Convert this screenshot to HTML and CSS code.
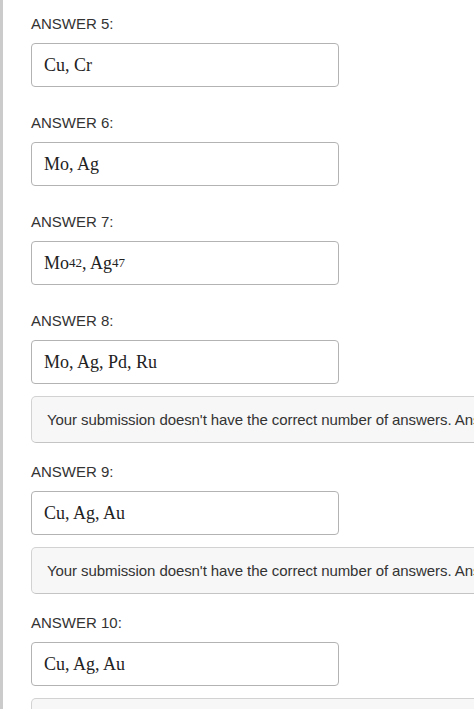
FILE: index.html
```html
<!DOCTYPE html>
<html lang="en">
<head>
    <meta charset="UTF-8">
    <meta name="viewport" content="width=device-width, initial-scale=1.0">
    <title>Answers</title>
    <link rel="stylesheet" href="styles.css">
</head>
<body>
    <div class="answers">
        <div class="question">
            <div class="question-label">ANSWER 5:</div>
            <div class="answer-box">Cu, Cr</div>
        </div>
        <div class="question">
            <div class="question-label">ANSWER 6:</div>
            <div class="answer-box">Mo, Ag</div>
        </div>
        <div class="question">
            <div class="question-label">ANSWER 7:</div>
            <div class="answer-box">Mo<sub>42</sub>, Ag<sub>47</sub></div>
        </div>
        <div class="question has-feedback">
            <div class="question-label">ANSWER 8:</div>
            <div class="answer-box">Mo, Ag, Pd, Ru</div>
            <div class="feedback">Your submission doesn't have the correct number of answers. Answers are separated with a comma.</div>
        </div>
        <div class="question has-feedback">
            <div class="question-label">ANSWER 9:</div>
            <div class="answer-box">Cu, Ag, Au</div>
            <div class="feedback">Your submission doesn't have the correct number of answers. Answers are separated with a comma.</div>
        </div>
        <div class="question has-feedback">
            <div class="question-label">ANSWER 10:</div>
            <div class="answer-box">Cu, Ag, Au</div>
            <div class="feedback">Your submission doesn't have the correct number of answers. Answers are separated with a comma.</div>
        </div>
    </div>
</body>
</html>
```

FILE: styles.css
```css
html, body { margin: 0; padding: 0; overflow: hidden; background: #fff; }
body { font-family: Arial, "Liberation Sans", sans-serif; color: #333; }
.answers { border-left: 3px solid #cbcbcb; padding: 14px 0 0 28px; min-height: 709px; box-sizing: border-box; }
.question { margin-bottom: 26px; }
.question.has-feedback { margin-bottom: 19px; }
.question-label { font-size: 15px; line-height: 20px; margin-bottom: 9px; }
.answer-box { width: 308px; height: 44px; box-sizing: border-box; border: 1px solid #b3b3b3; border-radius: 4px; padding: 0 12px; display: flex; align-items: center; font-family: "Liberation Serif", "Times New Roman", serif; font-size: 18px; color: #222; background: #fff; }
.answer-box sub { font-size: 13px; vertical-align: -4px; line-height: 0; }
.feedback { margin-top: 12px; width: 720px; height: 47px; box-sizing: border-box; border: 1px solid #d2d2d2; border-bottom-color: #c4c4c4; border-radius: 5px; background: #f7f7f7; padding: 0 15px; display: flex; align-items: center; white-space: nowrap; font-size: 15px; letter-spacing: -0.08px; color: #333; }
```
